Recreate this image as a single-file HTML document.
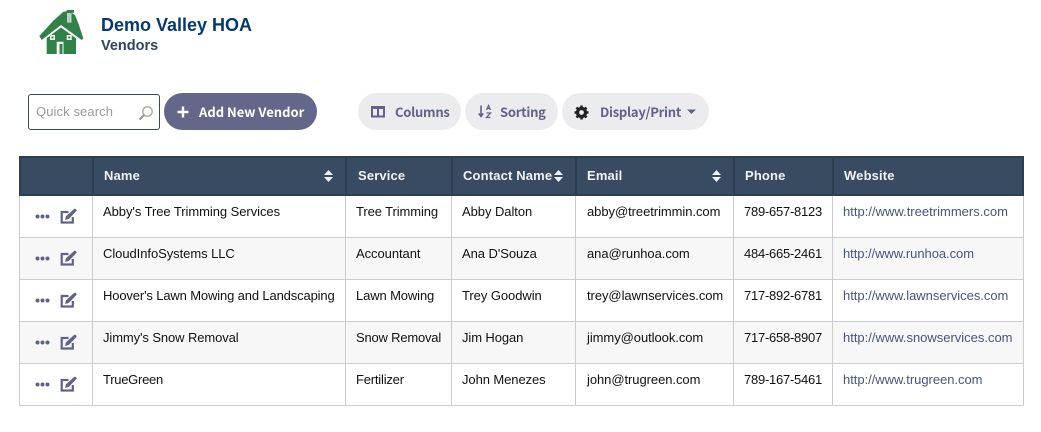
<!DOCTYPE html>
<html><head><meta charset="utf-8">
<style>
html,body{margin:0;padding:0;background:#fff;width:1041px;height:432px;overflow:hidden}
body{font-family:"Liberation Sans",sans-serif;position:relative}
.a{position:absolute;white-space:nowrap}
.btn{position:absolute;background:#ececee;border-radius:19px;height:37px;top:93px}
.bt{position:absolute;white-space:nowrap;font-family:"Noto Sans CJK JP","Liberation Sans",sans-serif;font-weight:700;font-size:13px;color:#5f6388;line-height:18px;top:103px}
.hl{position:absolute;top:156px;height:40px;width:2px;background:#2c3e50}
.vl{position:absolute;top:196px;height:210px;width:1px;background:#ccc}
.hl2{position:absolute;left:19px;width:1005px;height:1px;background:#ccc}
.row{position:absolute;left:20px;width:1003px;height:41px;background:#f7f7f7}
.th{position:absolute;top:168px;font-weight:700;font-size:13px;line-height:16px;color:#f0f2f5;white-space:nowrap;letter-spacing:.15px}
.td{position:absolute;font-size:13px;line-height:16px;color:#111;white-space:nowrap;letter-spacing:-.06px}
.p{letter-spacing:-.25px}
.l{color:#46557c;letter-spacing:.01px}
</style></head><body>

<svg class="a" style="left:38px;top:10px" width="46" height="46" viewBox="0 0 46 46">
<path fill="#32814a" d="M1.300 26L15.300 10.700L25.300 1.700L28.700 1.200V0H36V2.700H33.700L37 5L40.300 13.300L45.300 28.300L43.700 30L23 15L3.700 30Z"/>
<path fill="#b5d3bf" d="M29 3h4.500v9.700H29z"/>
<path fill="#32814a" fill-rule="evenodd" d="M23 17.500L38 28.300V44H8.700V28.300ZM12 25v5h5v-5ZM28.700 25v5h5v-5ZM18.700 31.700V44H21.500V34H24.500V44H25.500V31.700Z"/>
<path fill="#32814a" d="M13.500 26.500h2v2h-2zM30.200 26.500h2v2h-2z"/>
</svg>
<div class="a" style="left:101px;top:15px;font-size:18px;line-height:21px;font-weight:700;color:#053a6f">Demo Valley HOA</div>
<div class="a" style="left:101px;top:38px;font-size:14.500px;line-height:17px;font-weight:700;color:#2f4560">Vendors</div>

<div class="a" style="left:28px;top:94px;width:130px;height:34px;border:1px solid #37475f;border-radius:3px;background:#fff"></div>
<div class="a" style="left:36px;top:103px;font-size:13px;letter-spacing:.1px;line-height:17px;color:#9a9a9a">Quick search</div>
<svg class="a" style="left:137px;top:105px" width="17" height="17" viewBox="0 0 17 17"><circle cx="10.500" cy="6.500" r="4.700" fill="none" stroke="#aaa" stroke-width="1.400"/><path d="M7 10L2.500 14.500" stroke="#999" stroke-width="2.200"/></svg>

<div class="a" style="left:164px;top:93px;width:153px;height:37px;border-radius:19px;background:#646789"></div>
<svg class="a" style="left:176px;top:105px" width="14" height="14" viewBox="0 0 14 14"><path d="M7 1.500V12.500M1.500 7H12.500" stroke="#fff" stroke-width="2.400"/></svg>
<div class="bt" style="left:199px;color:#fff">Add New Vendor</div>

<div class="btn" style="left:358px;width:103px"></div>
<svg class="a" style="left:371px;top:105px" width="14" height="13" viewBox="0 0 14 13"><path fill="none" stroke="#5f6388" stroke-width="2" d="M1 2h12v9.500H1zM7 2v9.500"/><path stroke="#5f6388" stroke-width="2" d="M1 3h12"/></svg>
<div class="bt" style="left:395px;letter-spacing:-.25px">Columns</div>

<div class="btn" style="left:465px;width:93px"></div>
<svg class="a" style="left:478px;top:104px" width="14" height="15" viewBox="0 0 14 15"><path fill="none" stroke="#5f6388" stroke-width="1.600" d="M3 1.500V12M.8 9.500L3 12.500L5.200 9.500"/><path fill="none" stroke="#5f6388" stroke-width="1.300" d="M8.500 6L10.500 1.500L12.500 6M9 4.500H12M8.500 9H12.500L8.500 13.500H12.500"/></svg>
<div class="bt" style="left:500px;letter-spacing:-.25px">Sorting</div>

<div class="btn" style="left:562px;width:147px"></div>
<svg class="a" style="left:574px;top:105px" width="15" height="15" viewBox="0 0 15 15"><circle cx="7.500" cy="7.500" r="4" fill="none" stroke="#222" stroke-width="3.200"/><path stroke="#222" stroke-width="2.600" d="M7.500 .5V3M7.500 12V14.500M.5 7.500H3M12 7.500H14.500M2.500 2.500L4.300 4.300M10.700 10.700L12.500 12.500M12.500 2.500L10.700 4.300M4.300 10.700L2.500 12.500"/></svg>
<div class="bt" style="left:600px;letter-spacing:-.25px">Display/Print</div>
<svg class="a" style="left:687px;top:109px" width="9" height="6" viewBox="0 0 9 6"><path fill="#5f6388" d="M0 .5H9L4.500 5Z"/></svg>

<!-- table header -->
<div class="a" style="left:19px;top:156px;width:1005px;height:40px;background:#394b60;box-sizing:border-box;border:2px solid #2c3e50"></div>
<div class="hl" style="left:92px"></div>
<div class="hl" style="left:345px"></div>
<div class="hl" style="left:451px"></div>
<div class="hl" style="left:575px"></div>
<div class="hl" style="left:733px"></div>
<div class="hl" style="left:832px"></div>
<div class="th" style="left:104px">Name</div>
<div class="th" style="left:358px">Service</div>
<div class="th" style="left:463px">Contact Name</div>
<div class="th" style="left:587px">Email</div>
<div class="th" style="left:745px">Phone</div>
<div class="th" style="left:844px">Website</div>
<svg class="a" style="left:324px;top:170px" width="9" height="12" viewBox="0 0 9 12"><path fill="#eef0f3" d="M0 5L4.500 0L9 5ZM0 7L4.500 12L9 7Z"/></svg>
<svg class="a" style="left:554px;top:170px" width="9" height="12" viewBox="0 0 9 12"><path fill="#eef0f3" d="M0 5L4.500 0L9 5ZM0 7L4.500 12L9 7Z"/></svg>
<svg class="a" style="left:712px;top:170px" width="9" height="12" viewBox="0 0 9 12"><path fill="#eef0f3" d="M0 5L4.500 0L9 5ZM0 7L4.500 12L9 7Z"/></svg>

<!-- rows -->
<div class="row" style="top:238px"></div>
<div class="row" style="top:322px"></div>
<div class="hl2" style="top:237px"></div>
<div class="hl2" style="top:279px"></div>
<div class="hl2" style="top:321px"></div>
<div class="hl2" style="top:363px"></div>
<div class="hl2" style="top:405px"></div>
<div class="vl" style="left:19px"></div>
<div class="vl" style="left:92px"></div>
<div class="vl" style="left:345px"></div>
<div class="vl" style="left:451px"></div>
<div class="vl" style="left:575px"></div>
<div class="vl" style="left:733px"></div>
<div class="vl" style="left:832px"></div>
<div class="vl" style="left:1023px"></div>

<div class="td" style="left:103px;top:204px">Abby's Tree Trimming Services</div>
<div class="td" style="left:356px;top:204px;letter-spacing:-.1px">Tree Trimming</div>
<div class="td" style="left:462px;top:204px">Abby Dalton</div>
<div class="td" style="left:587px;top:204px">abby@treetrimmin.com</div>
<div class="td p" style="left:744px;top:204px">789-657-8123</div>
<div class="td l" style="left:843px;top:204px">http://www.treetrimmers.com</div>

<div class="td" style="left:103px;top:246px">CloudInfoSystems LLC</div>
<div class="td" style="left:356px;top:246px">Accountant</div>
<div class="td" style="left:462px;top:246px">Ana D'Souza</div>
<div class="td" style="left:587px;top:246px">ana@runhoa.com</div>
<div class="td p" style="left:744px;top:246px">484-665-2461</div>
<div class="td l" style="left:843px;top:246px;letter-spacing:-.06px">http://www.runhoa.com</div>

<div class="td" style="left:103px;top:288px;letter-spacing:-.14px">Hoover's Lawn Mowing and Landscaping</div>
<div class="td" style="left:356px;top:288px;letter-spacing:-.12px">Lawn Mowing</div>
<div class="td" style="left:462px;top:288px">Trey Goodwin</div>
<div class="td" style="left:587px;top:288px">trey@lawnservices.com</div>
<div class="td p" style="left:744px;top:288px">717-892-6781</div>
<div class="td l" style="left:843px;top:288px;letter-spacing:-.03px">http://www.lawnservices.com</div>

<div class="td" style="left:103px;top:330px;letter-spacing:-.1px">Jimmy's Snow Removal</div>
<div class="td" style="left:356px;top:330px;letter-spacing:-.2px">Snow Removal</div>
<div class="td" style="left:462px;top:330px;letter-spacing:-.1px">Jim Hogan</div>
<div class="td" style="left:587px;top:330px">jimmy@outlook.com</div>
<div class="td p" style="left:744px;top:330px">717-658-8907</div>
<div class="td l" style="left:843px;top:330px;letter-spacing:-.01px">http://www.snowservices.com</div>

<div class="td" style="left:103px;top:372px;letter-spacing:-.27px">TrueGreen</div>
<div class="td" style="left:356px;top:372px;letter-spacing:-.2px">Fertilizer</div>
<div class="td" style="left:462px;top:372px;letter-spacing:-.08px">John Menezes</div>
<div class="td" style="left:587px;top:372px">john@trugreen.com</div>
<div class="td p" style="left:744px;top:372px">789-167-5461</div>
<div class="td l" style="left:843px;top:372px;letter-spacing:-.03px">http://www.trugreen.com</div>

<svg width="0" height="0" style="position:absolute"><defs><g id="ic">
<circle cx="2.500" cy="9.500" r="2" fill="#5f6388"/><circle cx="7.500" cy="9.500" r="2" fill="#5f6388"/><circle cx="12.500" cy="9.500" r="2" fill="#5f6388"/>
<path fill="none" stroke="#5f6388" stroke-width="2.200" d="M33.500 5H26.700V15.500H37.800V10"/>
<path fill="#5f6388" d="M30 13L31 9.300L38.500 2.500L40 1.500L41.800 3L41 4.500L33.700 12Z"/>
</g></defs></svg>
<svg class="a" style="left:35px;top:207px" width="45" height="18" viewBox="0 0 45 18"><use href="#ic"/></svg>
<svg class="a" style="left:35px;top:249px" width="45" height="18" viewBox="0 0 45 18"><use href="#ic"/></svg>
<svg class="a" style="left:35px;top:291px" width="45" height="18" viewBox="0 0 45 18"><use href="#ic"/></svg>
<svg class="a" style="left:35px;top:333px" width="45" height="18" viewBox="0 0 45 18"><use href="#ic"/></svg>
<svg class="a" style="left:35px;top:375px" width="45" height="18" viewBox="0 0 45 18"><use href="#ic"/></svg>
</body></html>
